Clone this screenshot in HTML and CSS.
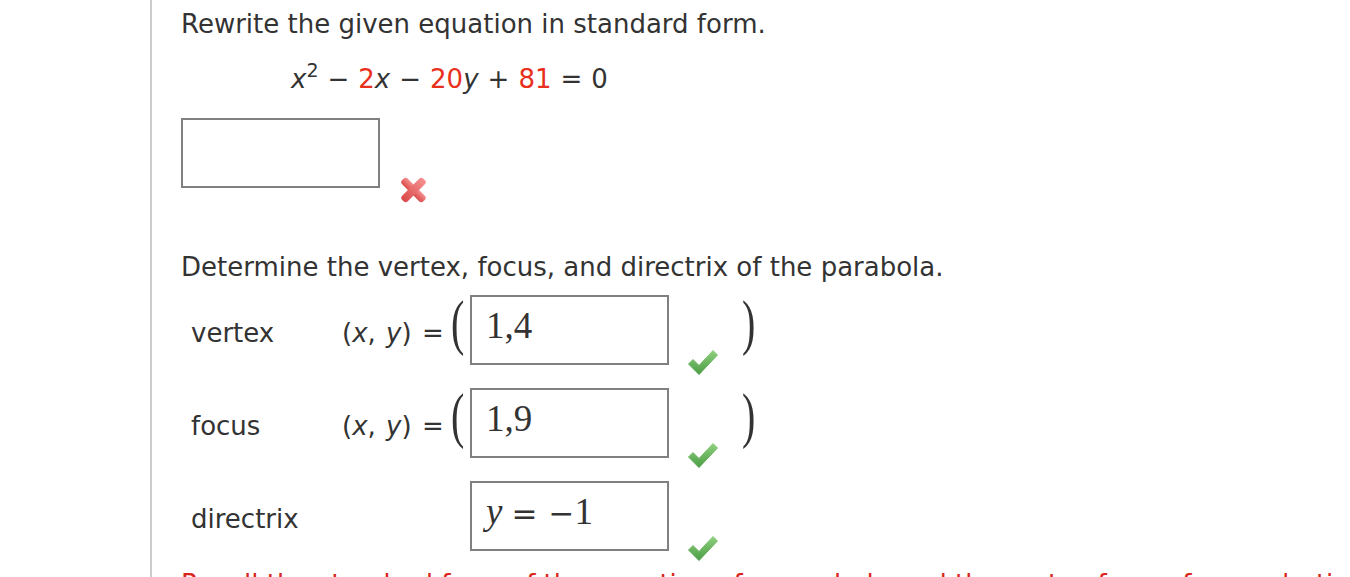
FILE: index.html
```html
<!DOCTYPE html>
<html lang="en">
  <head>
    <meta charset="UTF-8" />
    <title>Parabola</title>
    <link rel="stylesheet" href="styles.css">
  </head>
  <body>
    <div id="question">
      <p class="prompt">Rewrite the given equation in standard form.</p>
      <p class="equation"><i>x</i><sup>2</sup> &minus; <span class="coef">2</span><i>x</i> &minus; <span class="coef">20</span><i>y</i> + <span class="coef">81</span> = 0</p>

      <div class="entry">
        <div class="box"></div>
        <svg class="wrong" viewBox="0 0 27 26">
          <defs>
            <linearGradient id="red" x1="0" y1="0" x2="0" y2="1">
              <stop offset="0" stop-color="#f59090" />
              <stop offset="1" stop-color="#d94a48" />
            </linearGradient>
          </defs>
          <g fill="url(#red)" transform="rotate(45 13.5 13)">
            <rect x="-1.5" y="9" width="30" height="8" rx="3" />
            <rect x="9.5" y="-2" width="8" height="30" rx="3" />
          </g>
        </svg>
      </div>

      <p class="prompt part">Determine the vertex, focus, and directrix of the parabola.</p>

      <div class="answers">
        <span class="label">vertex</span>
        <span class="pair">(<i>x</i>, <i>y</i>) =</span>
        <span class="paren">(</span>
        <div class="box math">1,4</div>
        <svg class="check" viewBox="0 0 32 27">
          <defs>
            <linearGradient id="green1" x1="0" y1="0" x2="0" y2="1">
              <stop offset="0" stop-color="#8fd07e" />
              <stop offset="1" stop-color="#4b9c46" />
            </linearGradient>
          </defs>
          <polygon fill="url(#green1)" stroke="url(#green1)" stroke-linejoin="round" points="1.5,15 6,10.5 12,16.5 26,1.5 30.5,6 12,25.5" />
        </svg>
        <span class="paren">)</span>

        <span class="label">focus</span>
        <span class="pair">(<i>x</i>, <i>y</i>) =</span>
        <span class="paren">(</span>
        <div class="box math">1,9</div>
        <svg class="check" viewBox="0 0 32 27">
          <defs>
            <linearGradient id="green2" x1="0" y1="0" x2="0" y2="1">
              <stop offset="0" stop-color="#8fd07e" />
              <stop offset="1" stop-color="#4b9c46" />
            </linearGradient>
          </defs>
          <polygon fill="url(#green2)" stroke="url(#green2)" stroke-linejoin="round" points="1.5,15 6,10.5 12,16.5 26,1.5 30.5,6 12,25.5" />
        </svg>
        <span class="paren">)</span>

        <span class="label">directrix</span>
        <span></span>
        <span></span>
        <div class="box math"><i>y</i><span class="op rel">=</span><span class="op">&minus;</span>1</div>
        <svg class="check" viewBox="0 0 32 27">
          <defs>
            <linearGradient id="green3" x1="0" y1="0" x2="0" y2="1">
              <stop offset="0" stop-color="#8fd07e" />
              <stop offset="1" stop-color="#4b9c46" />
            </linearGradient>
          </defs>
          <polygon fill="url(#green3)" stroke="url(#green3)" stroke-linejoin="round" points="1.5,15 6,10.5 12,16.5 26,1.5 30.5,6 12,25.5" />
        </svg>
        <span></span>
      </div>

      <p class="hint">Recall the standard form of the equation of a parabola and the vertex form of a quadratic relation that opens up or down.</p>
    </div>
  </body>
</html>
```

FILE: styles.css
```css
* {
  margin: 0;
  padding: 0;
  box-sizing: border-box;
}

html,
body {
  height: 100%;
  overflow: hidden;
  background: #ffffff;
}

body {
  font: 26px "DejaVu Sans", Verdana, sans-serif;
  color: #333333;
}

#question {
  min-height: 100%;
  margin-left: 150px;
  padding: 9px 0 0 29px;
  border-left: 2px solid #cccccc;
}

.prompt {
  line-height: 30px;
}

.equation {
  margin: 25px 0 0 110px;
  line-height: 30px;
  word-spacing: 0.75px;
}

.equation sup {
  font-size: 19px;
  line-height: 0;
  vertical-align: 11px;
}

.coef {
  color: #e8301c;
}

.entry {
  display: flex;
  align-items: flex-start;
  height: 70px;
  margin-top: 24px;
}

.box {
  width: 199px;
  height: 70px;
  border: 2px solid #808080;
  background: #ffffff;
}

.wrong {
  width: 27px;
  height: 26px;
  margin: 59px 0 0 20px;
}

.part {
  margin-top: 64px;
}

.answers {
  display: grid;
  grid-template-columns: 151px 107px 21px 199px 71px 30px;
  grid-auto-rows: 70px;
  row-gap: 23px;
  align-items: center;
  margin: 13px 0 0 10px;
}

.label,
.pair {
  margin-top: 6px;
  line-height: 30px;
}

.pair {
  word-spacing: 2px;
}

.paren {
  padding-left: 2px;
  font: 40px/50px "Liberation Serif", "Times New Roman", serif;
  color: #333333;
  transform: translateY(-7px) scaleY(1.55);
}

.math {
  padding: 9px 14px 0;
  font: 37px/40px "Liberation Serif", "Times New Roman", serif;
}

.math .op {
  font-family: "DejaVu Sans", sans-serif;
  font-size: 31px;
}

.math .rel {
  margin: 0 11px 0 9px;
}

.check {
  align-self: start;
  width: 32px;
  height: 27px;
  margin: 54px 0 0 18px;
}

.hint {
  margin-top: 18px;
  line-height: 30px;
  color: #d9261c;
}
```
